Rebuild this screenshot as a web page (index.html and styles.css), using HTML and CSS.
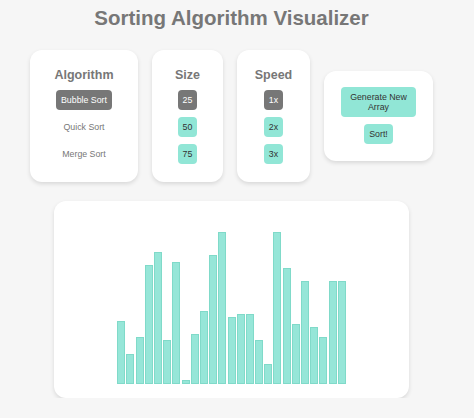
FILE: index.html
```html
<!DOCTYPE html>
<html lang="en">
  <head>
    <meta charset="UTF-8" />
    <meta name="viewport" content="width=device-width, initial-scale=1.0" />
    <title>Sorting Algorithm Visualizer</title>
    <link rel="stylesheet" href="styles.css">
  </head>
  <body>
    <div class="app">
      <h1>Sorting Algorithm Visualizer</h1>

      <div class="controls">
        <div class="card card-algo">
          <h3>Algorithm</h3>
          <button class="btn selected">Bubble Sort</button>
          <button class="btn plain">Quick Sort</button>
          <button class="btn plain">Merge Sort</button>
        </div>

        <div class="card card-size">
          <h3>Size</h3>
          <button class="btn selected">25</button>
          <button class="btn">50</button>
          <button class="btn">75</button>
        </div>

        <div class="card card-speed">
          <h3>Speed</h3>
          <button class="btn selected">1x</button>
          <button class="btn">2x</button>
          <button class="btn">3x</button>
        </div>

        <div class="card card-actions">
          <button class="btn btn-wide">Generate New Array</button>
          <button class="btn">Sort!</button>
        </div>
      </div>

      <div class="chart">
        <div id="bars" class="bars"></div>
      </div>
    </div>

    <script>
      // bar heights in px for the current array
      const heights = [
        63, 30, 47, 119, 132, 44, 122, 4, 50, 73, 129, 152, 67,
        70, 70, 44, 20, 152, 116, 60, 103, 57, 47, 103, 103,
      ];

      const bars = document.getElementById("bars");
      heights.forEach((h) => {
        const bar = document.createElement("div");
        bar.className = "bar";
        bar.style.height = h + "px";
        bars.appendChild(bar);
      });
    </script>
  </body>
</html>
```

FILE: styles.css
```css
body {
  margin: 0;
  font-family: "Liberation Sans", Arial, sans-serif;
  background-color: #f6f6f6;
}
.app {
  width: 463px;
}
h1 {
  margin: 6px 0 0;
  text-align: center;
  font-size: 20.5px;
  color: #777;
}
.controls {
  display: flex;
  justify-content: center;
  align-items: center;
  gap: 14px;
  margin-top: 20px;
}
.card {
  display: flex;
  flex-direction: column;
  align-items: center;
  gap: 7px;
  box-sizing: border-box;
  padding: 18px 0 18px;
  background: white;
  border-radius: 12px;
  box-shadow: 0 2px 4px rgba(0, 0, 0, 0.12);
}
.card h3 {
  margin: 0;
  font-size: 12.5px;
  line-height: 15px;
  color: #777;
}
.card-algo {
  width: 108px;
}
.card-size {
  width: 71px;
}
.card-speed {
  width: 73px;
}
.card-actions {
  width: 109px;
  padding: 16px 0 17px;
}
.btn {
  padding: 5px;
  border: none;
  border-radius: 4px;
  background: #91e6d6;
  color: #333;
  font-family: inherit;
  font-size: 8.8px;
  line-height: 10px;
  cursor: pointer;
}
.btn.selected {
  background: #777;
  color: white;
}
.btn.plain {
  background: transparent;
  color: #777;
}
.btn-wide {
  width: 75px;
}
.chart {
  display: flex;
  justify-content: center;
  align-items: flex-end;
  box-sizing: border-box;
  width: 355px;
  height: 197px;
  margin: 19px auto 0;
  padding-bottom: 14px;
  background: white;
  border-radius: 12px;
  box-shadow: 0 2px 4px rgba(0, 0, 0, 0.12);
}
.bars {
  display: flex;
  align-items: flex-end;
  gap: 1.2px;
}
.bar {
  width: 8px;
  box-sizing: border-box;
  background: #96e6d8;
  border: 1px solid #80dac9;
}
```
